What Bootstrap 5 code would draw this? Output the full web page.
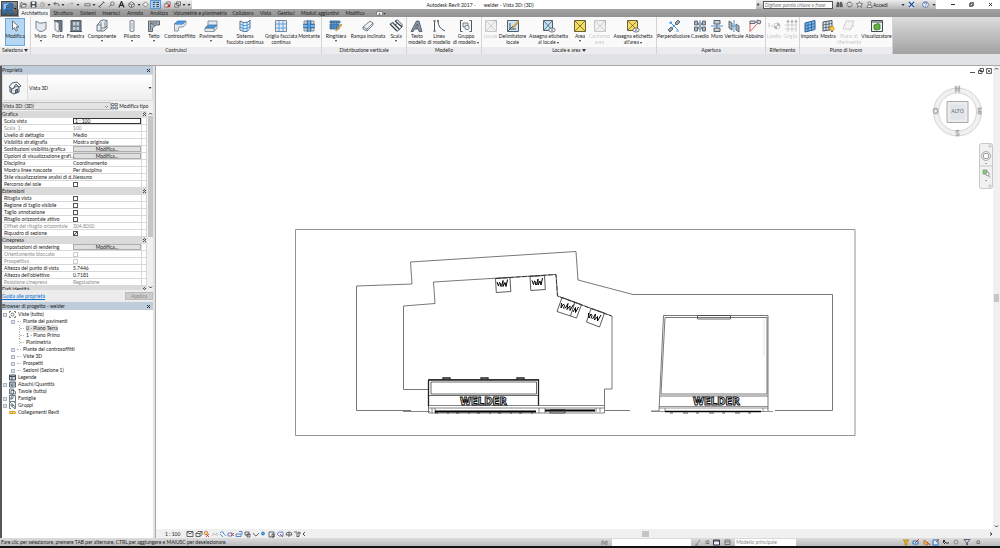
<!DOCTYPE html>
<html lang="it">
<head>
<meta charset="utf-8">
<meta name="viewport" content="width=device-width, initial-scale=1">
<title>Autodesk Revit 2017 - welder - Vista 3D: (3D)</title>
<link rel="stylesheet" href="https://cdn.jsdelivr.net/npm/bootstrap@5.3.0/dist/css/bootstrap.min.css">
<script src="https://cdn.jsdelivr.net/npm/bootstrap@5.3.0/dist/js/bootstrap.bundle.min.js"></script>
<style>
:root{--ink:#222;--line:#d8d8d8;--chrome:#e0e2e5;--head:#bfccda}
body{font-family:"Lato","Liberation Sans",sans-serif;font-size:5px;line-height:6px;color:var(--ink);background:#fff;white-space:nowrap;overflow:hidden;font-variant-ligatures:none}
button,input,select{font:inherit;color:inherit}
svg{display:block;flex:none}
.plain{border:0;background:none;padding:0;border-radius:0}
.app{min-height:100vh}
/* title bar */
.appmenu{width:17px;height:15px;left:1px;top:1px;background:linear-gradient(#8e969e,#4f575f);border:1px solid #444;z-index:2}
.titlebar{height:9px}
.wintitle{padding-left:12px}
.qat{margin-left:19px;background:linear-gradient(#f0f0f0,#b9b9b9);display:grid;grid-template-columns:9px 10px 8px 6px 8px 6px 8px 8px 10px 4px 10px 10px 10px 10px 5px 9px 11px 12px 8px 5px 6px;justify-items:center;align-items:stretch}
.qat button{display:flex;align-items:center;justify-content:center;width:100%}
.qat .on{background:#a9d1f5;border:1px solid #5b9bd5}
.infobar{background:linear-gradient(#ececec,#b5b5b5);width:180px;gap:3px}
.infobar input{width:70px;height:8px;border:1px solid #555;border-radius:0;padding:0 1px;background:#fff;line-height:6px}
.infobar input::placeholder{color:#777;opacity:1;font-style:italic}
.wins{width:64px}
/* tabs */
.tabstrip{height:8px;background:linear-gradient(#a3a3a3,#929292);padding-left:19px}
.tablist{display:grid;grid-template-columns:31px 26px 24px 22px 26px 22px 60px 26px 19px 22px 46px 24px 28px}
.tablist a{color:#222;text-decoration:none;line-height:8px;text-align:center;display:flex;align-items:center;justify-content:center}
.tablist a.active{background:#f4f5f6}
/* ribbon */
.ribbon{background:linear-gradient(#dcdcdc,#a2a2a2);height:37px}
.panel{border-right:1px solid #d4d4d4;background:#fafafa}
.tools{display:grid;height:30px}
.tools button{display:flex;flex-direction:column;align-items:center;padding-top:2px;min-width:0}
.tools button:disabled{color:#bbb;opacity:.8}
.tools button:disabled svg{filter:grayscale(1);opacity:.4}
.tools .dn{margin-top:1px}
.caption2{height:7px;line-height:7px;background:#ececee;text-align:center}
.c-sel{width:31px}.c-sel .tools{grid-template-columns:20px;justify-content:center;padding:1px 0}
.c-sel button{background:#b5d7f3;border:1px solid #6da7da;padding-top:0}
.c-cos .tools{grid-template-columns:19px 16px 19px 34px 26px 18px 34px 28px 40px 32px 24px}
.c-dis .tools{grid-template-columns:28px 36px 20px}
.c-mod .tools{grid-template-columns:20px 24px 30px}
.c-loc .tools{grid-template-columns:17px 27px 45px 18px 21px 46px}
.c-ape .tools{grid-template-columns:33px 20px 14px 20px 21px}
.c-rif .tools{grid-template-columns:16px 17px}
.c-pia .tools{grid-template-columns:19px 18px 24px 31px}
.dn{width:0;height:0;border:1px solid transparent;border-top:2px solid #333;border-bottom:0;display:inline-block}
.caption2 .dn{border-width:3px 2px 0}
.options{height:12px;background:var(--chrome);border-bottom:1px solid #a8a8a8}
/* docks */
.docks{width:156px;background:var(--chrome);border-left:2px solid #55575a;padding-right:2px;border-right:1px solid #aaa}
.dockhead{height:8px;background:var(--head);padding:0 2px 0 0}
.typebox{height:27px;background:linear-gradient(#fff,#eee);border:1px solid #ddd}
.typebox .thumb{width:25px;border-right:1px solid #ddd;background:#f6f6f6}
.filter{height:10px;background:#f0f0f0;gap:2px}
.filter select{width:109px;height:8px;border:1px solid #bbb;border-radius:0;background:#e4e4e4;appearance:none;padding:0}
.filter .chev{margin-left:-9px;pointer-events:none}
.props{height:179px;overflow:hidden;background:#fff}
.ptable{width:145px;table-layout:fixed;border-collapse:separate;border-spacing:0}
.ptable th,.ptable td{height:7px;line-height:6px;padding:0 0 0 2px;border-bottom:1px solid var(--line);font-weight:400}
.ptable td{padding-left:0;border-right:1px solid var(--line)}
.ptable .grp th{background:#dadada;padding-left:0;border-color:#dadada}
.ptable .off{color:#8b8b8b}
.ptable td button{display:block;width:100%;height:6px;background:#dfdfdf;border:1px solid #adadad;line-height:4px}
.ptable td input[type=text]{display:block;width:100%;height:6px;border:1px solid #333;padding:0 1px;line-height:4px}
input[type=checkbox]{appearance:none;display:block;width:5px;height:5px;margin:0;border:1px solid #555;background:#fff}
input[type=checkbox]:disabled{border-color:#ccc}
input[type=checkbox]:checked{background:linear-gradient(135deg,#fff 30%,#555 50%,#fff 70%)}
.vbar{width:7px;background:#f0f0f0}
.vbar .grip{background:#c6c6c6;width:5px}
.helprow{height:12px;background:#ececec}
.helprow a{color:#0a6fd0}
.helprow button{width:28px;height:8px;background:#ccc;color:#888;border:1px solid #bbb;line-height:6px}
.tree{background:#fff;padding:1px 0}
.tree ul{list-style:none;margin:0;padding:0 0 0 8px}
.tree>ul{padding-left:1px}
.node{height:7px;line-height:7px;display:flex;align-items:center;gap:2px}
.box{width:4px;height:4px;border:1px solid #a9b4c2;background:#dfe5ee;flex:none}
.dash{width:4px;border-top:1px dotted #bbb;flex:none}
.nobox{width:4px;flex:none}
.pick{background:#e2e2e2}
.deep{border-left:1px dotted #bbb}
/* view */
.view{background:#fff;min-width:0}
.cube{right:8px;top:18px}
.steer{right:0;top:77px}
.mdi{right:1px;top:2px;gap:2px}
.viewbar{height:9px;background:#f0f0f0}
.viewbar .scale{width:30px;padding-left:9px}
.statusbar{height:10px;background:linear-gradient(#ddd,#bbb);border-bottom:2px solid #111;padding-left:1px}
.statusbar select{height:7px;border:0;border-radius:0;background:#fff;padding:0 1px;appearance:none;color:#888}
.stright{width:399px;padding-right:20px}
.workset{width:79px}
.design{width:61px}
</style>
</head>
<body>
<svg width="0" height="0" class="position-absolute" fill="none" stroke="#59636e">
<defs>
<symbol id="dd" viewBox="0 0 4 4"><path d="M.5 1h3L2 3z" fill="#333" stroke="none"/></symbol>
<symbol id="pin" viewBox="0 0 5 5"><path d="M1 2l1.500-1.500L4 2M1 4l1.500-1.500L4 4" fill="none" stroke="#222" stroke-width=".8"/></symbol>
<symbol id="x" viewBox="0 0 5 5"><path d="M1 1l3 3M4 1L1 4" stroke="#222" stroke-width=".9"/></symbol>
<symbol id="i-cur" viewBox="0 0 14 14"><path d="M4.500 2v8.500l2-2 1.500 3.500 1.500-.7L8 8h3z" fill="#fff" stroke="#444" stroke-width=".7"/></symbol>
<symbol id="i-muro" viewBox="0 0 14 14"><path d="M2 2q3 3 7 2l3-1v7q-4 4-8 1.500l-2-2z" fill="#e3e9ef" stroke="#6b7783" stroke-width=".9"/></symbol>
<symbol id="i-porta" viewBox="0 0 14 14"><path d="M3 1.500h8v11H9" fill="#6d7984" stroke="#56616b"/><path d="M4 2l4 2v9l-4-2z" fill="#edf1f5" stroke="#56616b" stroke-width=".7"/></symbol>
<symbol id="i-fin" viewBox="0 0 14 14"><path d="M2 1.500h10v11H2z" fill="#73808c" stroke="#4c5762"/><path d="M4 3h2.500v3.500H4zM7.500 3H10v3.500H7.500zM4 8h2.500v3H4zM7.500 8H10v3H7.500z" fill="#c3ced9" stroke="none"/><path d="M1 12.500h12" stroke="#4c5762"/></symbol>
<symbol id="i-comp" viewBox="0 0 14 14"><path d="M2 6l3-3V2q3-2 7-.5V9l-3 3H2z" fill="#e6ebf0" stroke="#5e6a76" stroke-width=".9"/><path d="M2 6h4V3.500M6 6v3h4V3.500l2-2M10 9l2-2M6 9v3" stroke="#5e6a76" stroke-width=".8" fill="none"/></symbol>
<symbol id="i-pil" viewBox="0 0 14 14"><path d="M5 2q2-1.500 4 0v10q-2 1.500-4 0z" fill="#e9edf1" stroke="#707c88" stroke-width=".9"/><path d="M7 4v6" stroke="#9aa5b0" stroke-width=".8"/></symbol>
<symbol id="i-tetto" viewBox="0 0 14 14"><path d="M1.500 2h11v4H9L5.500 9v3.500h-4z" fill="#a9b4be" stroke="#505b66" stroke-width=".9"/><path d="M3.500 4h7M3.500 4v7M3.500 4L8 6.500" fill="none" stroke="#505b66" stroke-width=".7"/></symbol>
<symbol id="i-contro" viewBox="0 0 14 14"><path d="M1.500 5l3-3H13l-3 3z" fill="#4e9be0" stroke="#3675b4" stroke-width=".8"/><path d="M1.500 5H10l3-3v3l-3 3H6l-1 4H1.500z" fill="#e2e8ee" stroke="#75818d" stroke-width=".8"/><path d="M3 5.500l2-2h6l-2 2z" fill="#4e9be0" stroke="none"/></symbol>
<symbol id="i-pav" viewBox="0 0 14 14"><path d="M4 2h9v7l-3 3.500H1V9l3-3z" fill="#e2e8ee" stroke="#75818d" stroke-width=".8"/><path d="M1.500 9l3-3H13l-3 3z" fill="#4e9be0" stroke="#3675b4" stroke-width=".8"/><path d="M1 9h9v3.500" fill="none" stroke="#75818d" stroke-width=".8"/></symbol>
<symbol id="i-sis" viewBox="0 0 14 14"><path d="M2 2q4 3 8 1l2-2v8.500l-3 3Q5 13 2 11z" fill="#e7f1fb" stroke="#45617e" stroke-width=".9"/><path d="M2 5q4 3 8 1l2-2M2 8q4 3 8 1l2-2M5 3.500V12M9 3.500v9" fill="none" stroke="#3f8fd9" stroke-width=".9"/></symbol>
<symbol id="i-gri" viewBox="0 0 14 14"><path d="M1.500 1.500h11v11h-11z" fill="#e9edf1" stroke="#7d8893"/><path d="M5 1v12M9 1v12M1 5h12M1 9h12" stroke="#4a99e3" stroke-width=".9"/></symbol>
<symbol id="i-mon" viewBox="0 0 14 14"><path d="M2 2h3v3H2zM9 2h3v3H9zM2 9h3v3H2zM9 9h3v3H9z" fill="#d9e0e7" stroke="#6b7783" stroke-width=".8"/><path d="M5.500 1v12M8.500 1v12M1 5.500h12M1 8.500h12" stroke="#3b6c9c" stroke-width=".9"/><path d="M7 1v12M1 7h12" stroke="#4a99e3" stroke-width="1.600"/></symbol>
<symbol id="i-rin" viewBox="0 0 14 14"><path d="M1 2h10v2H1zM1 5h9v5H1z" fill="#4e8fcb" stroke="#396b9a" stroke-width=".8"/><path d="M2.500 2v8M5 2v8M7.500 2v8" stroke="#396b9a" stroke-width=".7"/><path d="M6.500 11.500L12 5l1 1-5.500 6z" fill="#f0b33c" stroke="#996f1c" stroke-width=".5"/></symbol>
<symbol id="i-ramp" viewBox="0 0 14 14"><path d="M2 8l7-6 3 2v2l-6 6-4-2z" fill="#eef1f4" stroke="#66727e" stroke-width=".9"/><path d="M2 8l4 2 6-6M6 10v2" fill="none" stroke="#66727e" stroke-width=".8"/></symbol>
<symbol id="i-scala" viewBox="0 0 14 14"><path d="M1 5l7 7M3.500 3.500l7 7M6 2l7 6" stroke="#39434e" stroke-width="1.300"/><path d="M1 5l2.500-1.500L6 6l2.500-1.500M6 2l2.500-1L13 5.500V8l-5 4.500" fill="none" stroke="#4b5763"/></symbol>
<symbol id="i-testo" viewBox="0 0 14 14"><path d="M1 12.500L6.500 2h2.500l3 10.500H9L8.500 10h-4l-1.200 2.500zM5.500 8H8l-.6-3z" fill="#8b98a5" stroke="#414d59" stroke-width=".8"/></symbol>
<symbol id="i-linea" viewBox="0 0 14 14"><path d="M2.500 2v10M6 2q0 7 7 10" fill="none" stroke="#4d5761"/><path d="M1.500 1h2v2h-2zM1.500 11h2v2h-2zM5 1h2v2H5z" fill="#6c7782" stroke="none"/></symbol>
<symbol id="i-gru" viewBox="0 0 14 14"><path d="M3.500 1.500h-2v11h2M10.500 1.500h2v11h-2" fill="none" stroke="#4d5761"/><path d="M4 4h5v4H4z" fill="#dfe5ea" stroke="#5e6a76" stroke-width=".8"/><circle cx="8" cy="8.500" r="2.200" fill="#eef1f4" stroke="#5e6a76" stroke-width=".8"/></symbol>
<symbol id="i-loc" viewBox="0 0 14 14"><path d="M1.500 1.500h11v11h-11z" fill="#bfe0f5" stroke="#525e69"/><path d="M2 2l10 10M12 2L2 12" stroke="#525e69" stroke-width=".8"/><path d="M8 1.500h4.500V6" fill="none" stroke="#222"/></symbol>
<symbol id="i-del" viewBox="0 0 14 14"><path d="M1.500 1.500h11v11h-11z" fill="#cbe4f6" stroke="#525e69"/><path d="M2 12l5-5M4 4v6h6" stroke="#3d4954" fill="none" stroke-width=".9"/><path d="M6 8.500L12 2l1 1-5.500 6z" fill="#f0b33c" stroke="#996f1c" stroke-width=".5"/></symbol>
<symbol id="i-asl" viewBox="0 0 14 14"><path d="M1.500 1.500h9v10h-9z" fill="#bfe0f5" stroke="#525e69"/><path d="M2 2l8 9M10 2l-8 9" stroke="#525e69" stroke-width=".8"/><ellipse cx="10" cy="11" rx="3.200" ry="2" fill="#fff" stroke="#4d5761" stroke-width=".8"/><circle cx="10" cy="11" r=".8" fill="#3b4650" stroke="none"/></symbol>
<symbol id="i-area" viewBox="0 0 14 14"><path d="M1.500 1.500h11v11h-11z" fill="#f7dc62" stroke="#6b6336"/><path d="M2 2l10 10M12 2L2 12" stroke="#6b6336" stroke-width=".8"/></symbol>
<symbol id="i-asa" viewBox="0 0 14 14"><path d="M1.500 1.500h10v10h-10z" fill="#f7dc62" stroke="#6b6336"/><path d="M2 2l9 9M11 2l-9 9" stroke="#6b6336" stroke-width=".8"/><ellipse cx="10" cy="11" rx="3.200" ry="2" fill="#fff" stroke="#4d5761" stroke-width=".8"/><circle cx="10" cy="11" r=".8" fill="#3b4650" stroke="none"/></symbol>
<symbol id="i-per" viewBox="0 0 14 14"><path d="M3 3l8 8M11 3l-8 8" stroke="#3f8fd9" stroke-width=".9"/><path d="M8 4l3-3 2 2-3 3zM1 11l3-3 2 2-3 3z" fill="#98a4b0" stroke="#47535f" stroke-width=".8"/><path d="M2 4h3M4 2v3M9 12h3" stroke="#3f8fd9" stroke-width=".9"/></symbol>
<symbol id="i-cav" viewBox="0 0 14 14"><path d="M1.500 2h3v4h-3zM1.500 8h3v4h-3zM9.500 2h3v4h-3zM9.500 8h3v4h-3z" fill="#aab5c0" stroke="#47535f" stroke-width=".8"/><path d="M7 1v12" stroke="#3f8fd9"/><path d="M5.500 4h3v2h-3zM5.500 8h3v2h-3z" fill="#cfd7df" stroke="#47535f" stroke-width=".6"/></symbol>
<symbol id="i-mur" viewBox="0 0 14 14"><path d="M4 1.500h6V5H4zM4 9h6v3.500H4z" fill="#c4cdd6" stroke="#47535f" stroke-width=".9"/><path d="M1 7h12" stroke="#3f8fd9"/><path d="M7 5v4" stroke="#47535f" stroke-width=".7"/></symbol>
<symbol id="i-ver" viewBox="0 0 14 14"><path d="M2 2l3 2v7L2 9zM9 5l3 2v6l-3-2z" fill="#aab5c0" stroke="#47535f" stroke-width=".8"/><path d="M7 1v12M5 7h4" stroke="#3f8fd9" stroke-width=".9"/></symbol>
<symbol id="i-abb" viewBox="0 0 14 14"><path d="M2 12.500V3.500L11 3M2 12.500L11 3" fill="none" stroke="#d4604e"/><path d="M2 2h5v2.500H2zM9 1l4 1-1 3-3-1z" fill="#cfd7df" stroke="#47535f" stroke-width=".8"/></symbol>
<symbol id="i-liv" viewBox="0 0 14 14"><path d="M1 7h7M2 4v3" stroke="#555" stroke-dasharray="2 1"/><circle cx="10" cy="7" r="3" fill="#fff" stroke="#444" stroke-width=".8"/><path d="M10 4v3h3a3 3 0 0 0-3-3M10 10V7H7a3 3 0 0 0 3 3" fill="#222" stroke="none"/></symbol>
<symbol id="i-grg" viewBox="0 0 14 14"><path d="M4 4v9M8 4v9M12 4v9M1 6h12M1 10h12" stroke="#555" stroke-width=".8"/><circle cx="4" cy="2.500" r="1.300"/><circle cx="8" cy="2.500" r="1.300"/><circle cx="12" cy="2.500" r="1.300"/></symbol>
<symbol id="i-imp" viewBox="0 0 14 14"><path d="M2 4l10-2.500v9L2 13z" fill="#7bb9ef" stroke="#285d90"/><path d="M5 3.500v9M8.500 2.500v9M2 7l10-2.500M2 10l10-2.500" stroke="#285d90" stroke-width=".8"/></symbol>
<symbol id="i-mos" viewBox="0 0 14 14"><path d="M2 3l9-1.500v9L2 12z" fill="#dfe5eb" stroke="#47535f"/><path d="M5 3v8.500M8 2v9M2 6l9-1.500M2 9l9-1.500" stroke="#47535f" stroke-width=".8"/><circle cx="11" cy="9.500" r="2.200" fill="#fbc73d" stroke="#b98518" stroke-width=".6"/><path d="M10 12.500h2" stroke="#666"/></symbol>
<symbol id="i-pia" viewBox="0 0 14 14"><path d="M4 2h8l-3 8H1z" fill="#e5e5e5" stroke="#777"/><path d="M7 12l5-6" stroke="#777"/></symbol>
<symbol id="i-vis" viewBox="0 0 14 14"><path d="M1.500 1.500h11v11h-11z" fill="#eef2ee" stroke="#3f4a54"/><path d="M1 3h12" stroke="#3f4a54"/><path d="M4 6l4-1.500 2 1V10l-4 1-2-1z" fill="#63b246" stroke="#347a1f" stroke-width=".8"/></symbol>
</defs>
</svg>
<div class="app d-flex flex-column position-relative">
<button class="plain appmenu position-absolute d-flex align-items-center justify-content-center" aria-label="Menu applicazione"><svg width="15" height="13" viewBox="0 0 15 13"><path d="M1 1h6.500q3.500 0 3.500 3T8.500 7.500L11 12H8L6 8H4v4H1zM4 3.500v2h3q1 0 1-1t-1-1z" fill="#2f78bd" stroke="#163f6b" stroke-width=".5"/><path d="M1.500 1.500h6L4 3.500V6L1.500 8z" fill="#8cc6f6"/><path d="M12 6h2.500l-1.250 1.500z" fill="#111"/></svg></button>
<header class="titlebar d-flex justify-content-between">
<div class="qat">
<button class="plain" aria-label="Apri"><svg width="7" height="7" viewBox="0 0 8 8" fill="#eee" stroke="#444" stroke-width=".8"><path d="M1 7V2h2l1 1h2v1M1 7l1.500-3H7.500L6 7z"/></svg></button>
<button class="plain" aria-label="Salva"><svg width="7" height="7" viewBox="0 0 8 8"><path d="M1 1h6v6H1z" fill="#4a5664" stroke="#333" stroke-width=".6"/><path d="M2.500 1h3v2.500h-3zM2.500 5h3v2h-3z" fill="#fff"/></svg></button>
<button class="plain" aria-label="Sincronizza"><svg width="7" height="7" viewBox="0 0 8 8" fill="none" stroke="#999" stroke-width=".8"><circle cx="4" cy="4" r="2.500"/><path d="M4 2v2h2"/></svg></button>
<button class="plain" aria-label="Altro"><svg width="4" height="4"><use href="#dd"/></svg></button>
<button class="plain" aria-label="Annulla"><svg width="7" height="7" viewBox="0 0 8 8" fill="none" stroke="#555"><path d="M3 1L1 3l2 2M1 3h4q2 0 2 3"/></svg></button>
<button class="plain" aria-label="Altro"><svg width="4" height="4"><use href="#dd"/></svg></button>
<button class="plain" aria-label="Ripeti"><svg width="7" height="7" viewBox="0 0 8 8" fill="none" stroke="#aaa"><path d="M5 1l2 2-2 2M7 3H3Q1 3 1 6"/></svg></button>
<button class="plain" aria-label="Altro"><svg width="4" height="4"><use href="#dd"/></svg></button>
<button class="plain" aria-label="Misura"><svg width="7" height="7" viewBox="0 0 8 8" fill="none" stroke="#666" stroke-width=".8"><path d="M1 3v3M7 3v3M1 3h6M1 5.500h6"/></svg></button>
<button class="plain" aria-label="Altro"><svg width="4" height="4"><use href="#dd"/></svg></button>
<button class="plain" aria-label="Quota"><svg width="7" height="7" viewBox="0 0 8 8" fill="none" stroke="#333"><path d="M1.500 6.500l5-5M.5 5.500l2 2M5.500.5l2 2"/></svg></button>
<button class="plain" aria-label="Etichetta"><svg width="7" height="7" viewBox="0 0 8 8" fill="none" stroke="#555" stroke-width=".8"><path d="M1 7l3-3"/><circle cx="5" cy="3" r="2"/></svg></button>
<button class="plain" aria-label="Testo"><svg width="7" height="7" viewBox="0 0 8 8" fill="none" stroke="#222" stroke-width="1.200"><path d="M1 7.500l3-7 3 7M2 5h4"/></svg></button>
<button class="plain" aria-label="Vista 3D"><svg width="7" height="7" viewBox="0 0 8 8" fill="#eee" stroke="#444" stroke-width=".8"><path d="M1 3l3-2 3 2v3L4 7.500 1 6zM1 3l3 1.500L7 3M4 4.500v3"/></svg></button>
<button class="plain" aria-label="Altro"><svg width="4" height="4"><use href="#dd"/></svg></button>
<button class="plain" aria-label="Sezione"><svg width="7" height="7" viewBox="0 0 8 8" fill="#eee" stroke="#555" stroke-width=".8"><path d="M4 1l3 3-3 3-3-3z"/></svg></button>
<button class="plain on" aria-label="Linee sottili"><svg width="7" height="7" viewBox="0 0 8 8" stroke="#222"><path d="M1 1.500h3M5 1.500h3M1 4h2M5 4h3M1 6.500h2M5 6.500h3"/></svg></button>
<button class="plain" aria-label="Chiudi nascoste"><svg width="7" height="7" viewBox="0 0 8 8" fill="#eee" stroke="#555" stroke-width=".8"><path d="M1 3h4v4H1zM3 3V1h4v4"/><path d="M4 4l3 3M7 4L4 7" stroke="#d22" stroke-width="1.200"/></svg></button>
<button class="plain" aria-label="Cambia finestra"><svg width="7" height="7" viewBox="0 0 8 8" fill="#eee" stroke="#444" stroke-width=".8"><path d="M3 1h4.500v4H3zM1 3h4.500v4H1z"/></svg></button>
<button class="plain" aria-label="Altro"><svg width="4" height="4"><use href="#dd"/></svg></button>
<button class="plain" aria-label="Personalizza"><svg width="4" height="4"><use href="#dd"/></svg></button>
</div>
<div class="wintitle d-flex align-items-center gap-2"><span>Autodesk Revit 2017 -</span><span>welder - Vista 3D: (3D)</span></div>
<div class="d-flex">
<div class="infobar d-flex align-items-center">
<svg width="4" height="5" viewBox="0 0 4 5"><path d="M1.500 1v3l2-1.500z" fill="#222"/></svg>
<input type="text" placeholder="Digitare parola chiave o frase" aria-label="Cerca">
<svg width="7" height="7" viewBox="0 0 8 8" fill="#666" stroke="#333" stroke-width=".6"><path d="M1.500 1.500h1.500L3.500 6.500H.5zM5 1.500h1.500l1 5h-3zM3 3.500h2"/></svg>
<svg width="7" height="7" viewBox="0 0 8 8" fill="none" stroke="#555"><path d="M1 4a3 3 0 0 1 5-2l1 1M7 4a3 3 0 0 1-5 2L1 5"/></svg>
<svg width="7" height="7" viewBox="0 0 8 8" fill="#eee" stroke="#444" stroke-width=".7"><path d="M4 .7l1 2.300h2.500L5.600 4.600l.7 2.600L4 5.700 1.700 7.200l.7-2.600L.5 3H3z"/></svg>
<button class="plain d-flex align-items-center"><svg width="7" height="7" viewBox="0 0 8 8" fill="#eee" stroke="#444" stroke-width=".7"><circle cx="4" cy="2.500" r="1.700"/><path d="M1 7.500q0-3 3-3t3 3z"/></svg>Accedi</button>
<svg class="ms-auto" width="4" height="4"><use href="#dd"/></svg>
<svg width="7" height="7" viewBox="0 0 8 8"><path d="M.5.500h7v7h-7z" fill="#dfe9f5"/><path d="M1 1l6 6M7 1L1 7" stroke="#1f4f97" stroke-width="1.600"/></svg>
<svg class="ms-1" width="7" height="7" viewBox="0 0 8 8"><circle cx="4" cy="4" r="3.300" fill="#eef4fb" stroke="#35598c" stroke-width=".8"/><path d="M2.800 3q0-1.200 1.200-1.200T5.200 3Q5.200 3.700 4 4.300M4 5.300v1" fill="none" stroke="#1f4f97" stroke-width=".9"/></svg>
<svg width="4" height="4"><use href="#dd"/></svg>
</div>
<div class="wins d-flex align-items-center justify-content-around ps-2">
<button class="plain" aria-label="Riduci"><svg width="5" height="5"><path d="M0 2.500h4" stroke="#333"/></svg></button>
<button class="plain" aria-label="Ripristina"><svg width="5" height="5" viewBox="0 0 5 5" fill="#fff" stroke="#333" stroke-width=".7"><path d="M1.500.5h3v3h-3zM.5 1.500h3v3h-3z"/></svg></button>
<button class="plain" aria-label="Chiudi"><svg width="5" height="5"><use href="#x"/></svg></button>
</div>
</div>
</header>
<nav class="tabstrip"><div class="tablist">
<a href="#" class="active">Architettura</a><a href="#">Struttura</a><a href="#">Sistemi</a><a href="#">Inserisci</a><a href="#">Annota</a><a href="#">Analizza</a><a href="#">Volumetrie e planimetria</a><a href="#">Collabora</a><a href="#">Vista</a><a href="#">Gestisci</a><a href="#">Moduli aggiuntivi</a><a href="#">Modifica</a>
<a href="#" aria-label="Riduci barra"><svg width="10" height="5" viewBox="0 0 10 5"><rect x=".5" y=".5" width="6" height="4" rx="1" fill="#eee" stroke="#555" stroke-width=".6"/><path d="M2.500 3.500h2l-1-1.500zM7.500 2h2l-1 1.500z" fill="#222"/></svg></a>
</div></nav>
<section class="ribbon d-flex">
<div class="panel c-sel"><div class="tools"><button class="plain"><svg width="14" height="14"><use href="#i-cur"/></svg>Modifica</button></div><div class="caption2">Seleziona <i class="dn"></i></div></div>
<div class="panel c-cos"><div class="tools">
<button class="plain"><svg width="14" height="14"><use href="#i-muro"/></svg>Muro<i class="dn"></i></button>
<button class="plain"><svg width="14" height="14"><use href="#i-porta"/></svg>Porta</button>
<button class="plain"><svg width="14" height="14"><use href="#i-fin"/></svg>Finestra</button>
<button class="plain"><svg width="14" height="14"><use href="#i-comp"/></svg>Componente<i class="dn"></i></button>
<button class="plain"><svg width="14" height="14"><use href="#i-pil"/></svg>Pilastro<i class="dn"></i></button>
<button class="plain"><svg width="14" height="14"><use href="#i-tetto"/></svg>Tetto<i class="dn"></i></button>
<button class="plain"><svg width="14" height="14"><use href="#i-contro"/></svg>Controsoffitto</button>
<button class="plain"><svg width="14" height="14"><use href="#i-pav"/></svg>Pavimento<i class="dn"></i></button>
<button class="plain"><svg width="14" height="14"><use href="#i-sis"/></svg>Sistema<br>facciata continua</button>
<button class="plain"><svg width="14" height="14"><use href="#i-gri"/></svg>Griglia facciata<br>continua</button>
<button class="plain"><svg width="14" height="14"><use href="#i-mon"/></svg>Montante</button>
</div><div class="caption2">Costruisci</div></div>
<div class="panel c-dis"><div class="tools">
<button class="plain"><svg width="14" height="14"><use href="#i-rin"/></svg>Ringhiera<i class="dn"></i></button>
<button class="plain"><svg width="14" height="14"><use href="#i-ramp"/></svg>Rampa inclinata</button>
<button class="plain"><svg width="14" height="14"><use href="#i-scala"/></svg>Scala<i class="dn"></i></button>
</div><div class="caption2">Distribuzione verticale</div></div>
<div class="panel c-mod"><div class="tools">
<button class="plain"><svg width="14" height="14"><use href="#i-testo"/></svg>Testo<br>modello</button>
<button class="plain"><svg width="14" height="14"><use href="#i-linea"/></svg>Linea<br>di modello</button>
<button class="plain"><svg width="14" height="14"><use href="#i-gru"/></svg>Gruppo<span>di modello <i class="dn"></i></span></button>
</div><div class="caption2">Modello</div></div>
<div class="panel c-loc"><div class="tools">
<button class="plain" disabled><svg width="14" height="14"><use href="#i-loc"/></svg>Locale</button>
<button class="plain"><svg width="14" height="14"><use href="#i-del"/></svg>Delimitatore<br>locale</button>
<button class="plain"><svg width="14" height="14"><use href="#i-asl"/></svg>Assegna etichetta<span>al locale <i class="dn"></i></span></button>
<button class="plain"><svg width="14" height="14"><use href="#i-area"/></svg>Area<i class="dn"></i></button>
<button class="plain" disabled><svg width="14" height="14"><use href="#i-loc"/></svg>Contorno<br>area</button>
<button class="plain"><svg width="14" height="14"><use href="#i-asa"/></svg>Assegna etichetta<span>all'area <i class="dn"></i></span></button>
</div><div class="caption2">Locale e area <i class="dn"></i></div></div>
<div class="panel c-ape"><div class="tools">
<button class="plain"><svg width="14" height="14"><use href="#i-per"/></svg>Perpendicolare</button>
<button class="plain"><svg width="14" height="14"><use href="#i-cav"/></svg>Cavedio</button>
<button class="plain"><svg width="14" height="14"><use href="#i-mur"/></svg>Muro</button>
<button class="plain"><svg width="14" height="14"><use href="#i-ver"/></svg>Verticale</button>
<button class="plain"><svg width="14" height="14"><use href="#i-abb"/></svg>Abbaino</button>
</div><div class="caption2">Apertura</div></div>
<div class="panel c-rif"><div class="tools">
<button class="plain" disabled><svg width="14" height="14"><use href="#i-liv"/></svg>Livello</button>
<button class="plain" disabled><svg width="14" height="14"><use href="#i-grg"/></svg>Griglia</button>
</div><div class="caption2">Riferimento</div></div>
<div class="panel c-pia"><div class="tools">
<button class="plain"><svg width="14" height="14"><use href="#i-imp"/></svg>Imposta</button>
<button class="plain"><svg width="14" height="14"><use href="#i-mos"/></svg>Mostra</button>
<button class="plain" disabled><svg width="14" height="14"><use href="#i-pia"/></svg>Piano di<br>riferimento</button>
<button class="plain"><svg width="14" height="14"><use href="#i-vis"/></svg>Visualizzatore</button>
</div><div class="caption2">Piano di lavoro</div></div>
</section>
<div class="options"></div>
<main class="d-flex flex-grow-1">
<aside class="docks d-flex flex-column flex-shrink-0">
<div class="dockhead d-flex align-items-center justify-content-between"><span>Proprietà</span><button class="plain" aria-label="Chiudi proprietà"><svg width="5" height="5"><use href="#x"/></svg></button></div>
<div class="typebox d-flex align-items-center">
<div class="thumb d-flex align-items-center justify-content-center h-100"><svg width="14" height="14" viewBox="0 0 14 14" fill="#dde4ea" stroke="#414d59" stroke-width=".9"><path d="M2 6v5l4 2 5-2V6L9 5 5 7z"/><path d="M1 6l3-4 5-1 4 4-2 1-3-3-3 5z" fill="#f3f6f8"/><path d="M3.500 8v3.500M7.500 9v3l2-1V8z" fill="#7b8793"/></svg></div>
<span class="flex-grow-1">&nbsp;Vista 3D</span><svg width="4" height="4"><use href="#dd"/></svg></div>
<div class="filter d-flex align-items-center"><select aria-label="Filtro proprietà"><option>Vista 3D: (3D)</option></select><svg class="chev" width="5" height="5" viewBox="0 0 5 5"><path d="M1 2l1.500 1.500L4 2" fill="none" stroke="#666" stroke-width=".7"/></svg>
<button class="plain d-flex align-items-center"><svg width="7" height="7" viewBox="0 0 7 7" fill="#dfe8f1" stroke="#4a5a6a" stroke-width=".7"><path d="M.5.500h2.500v2H.5zM.5 4h2.500v2H.5zM4 .5h2.500v2H4zM4 4h2.500v2H4z"/></svg>&nbsp;Modifica tipo</button></div>
<div class="props d-flex justify-content-between">
<table class="ptable"><colgroup><col style="width:71px"><col style="width:69px"><col style="width:5px"></colgroup>
<tbody>
<tr class="grp"><th colspan="2">Grafica</th><th><svg width="5" height="5"><use href="#pin"/></svg></th></tr>
<tr><th><label for="p1">Scala vista</label></th><td><input id="p1" type="text" value="1 : 100"></td><td></td></tr>
<tr class="off"><th>Scala&nbsp; 1:</th><td>100</td><td></td></tr>
<tr><th>Livello di dettaglio</th><td>Medio</td><td></td></tr>
<tr><th>Visibilità stratigrafia</th><td>Mostra originale</td><td></td></tr>
<tr><th>Sostituzioni visibilità/grafica</th><td><button class="plain">Modifica...</button></td><td></td></tr>
<tr><th>Opzioni di visualizzazione grafi...</th><td><button class="plain">Modifica...</button></td><td></td></tr>
<tr><th>Disciplina</th><td>Coordinamento</td><td></td></tr>
<tr><th>Mostra linee nascoste</th><td>Per disciplina</td><td></td></tr>
<tr><th>Stile visualizzazione analisi di d...</th><td>Nessuno</td><td></td></tr>
<tr><th><label for="k1">Percorso del sole</label></th><td><input id="k1" type="checkbox"></td><td></td></tr>
<tr class="grp"><th colspan="2">Estensioni</th><th><svg width="5" height="5"><use href="#pin"/></svg></th></tr>
<tr><th><label for="k2">Ritaglia vista</label></th><td><input id="k2" type="checkbox"></td><td></td></tr>
<tr><th><label for="k3">Regione di taglio visibile</label></th><td><input id="k3" type="checkbox"></td><td></td></tr>
<tr><th><label for="k4">Taglio annotazione</label></th><td><input id="k4" type="checkbox"></td><td></td></tr>
<tr><th><label for="k5">Ritaglio orizzontale attivo</label></th><td><input id="k5" type="checkbox"></td><td></td></tr>
<tr class="off"><th>Offset del ritaglio orizzontale</th><td>304.8000</td><td></td></tr>
<tr><th><label for="k6">Riquadro di sezione</label></th><td><input id="k6" type="checkbox" checked></td><td></td></tr>
<tr class="grp"><th colspan="2">Cinepresa</th><th><svg width="5" height="5"><use href="#pin"/></svg></th></tr>
<tr><th>Impostazioni di rendering</th><td><button class="plain">Modifica...</button></td><td></td></tr>
<tr class="off"><th><label for="k7">Orientamento bloccato</label></th><td><input id="k7" type="checkbox" disabled></td><td></td></tr>
<tr class="off"><th><label for="k8">Prospettiva</label></th><td><input id="k8" type="checkbox" disabled></td><td></td></tr>
<tr><th>Altezza del punto di vista</th><td>5.7446</td><td></td></tr>
<tr><th>Altezza dell'obiettivo</th><td>0.7181</td><td></td></tr>
<tr class="off"><th>Posizione cinepresa</th><td>Regolazione</td><td></td></tr>
<tr class="grp"><th colspan="2">Dati identità</th><th><svg width="5" height="5"><use href="#pin"/></svg></th></tr>
</tbody></table>
<div class="vbar d-flex flex-column align-items-center justify-content-between"><svg width="5" height="5" viewBox="0 0 5 5"><path d="M1 3.500L2.500 2 4 3.500" fill="none" stroke="#333"/></svg><div class="grip flex-grow-1 mb-5"></div><svg width="5" height="5" viewBox="0 0 5 5"><path d="M1 1.500L2.500 3 4 1.500" fill="none" stroke="#333"/></svg></div>
</div>
<div class="helprow d-flex align-items-center justify-content-between"><a href="#">Guida alle proprietà</a><button class="plain" disabled>Applica</button></div>
<div class="dockhead d-flex align-items-center justify-content-between"><span>Browser di progetto - welder</span><button class="plain" aria-label="Chiudi browser"><svg width="5" height="5"><use href="#x"/></svg></button></div>
<div class="tree flex-grow-1">
<ul>
<li><div class="node"><i class="box"></i><svg width="7" height="7" viewBox="0 0 7 7" fill="none" stroke="#555" stroke-width=".8"><path d="M.5 2V.5H2M5 .5h1.500V2M6.500 5v1.500H5M2 6.500H.5V5"/><circle cx="3.500" cy="3.500" r="1.500"/></svg>Viste (tutto)</div>
<ul>
<li><div class="node"><i class="box"></i><i class="dash"></i>Piante dei pavimenti</div>
<ul><li class="deep"><div class="node"><i class="dash"></i><span class="pick">0 - Piano Terra</span></div></li><li class="deep"><div class="node"><i class="dash"></i>1 - Piano Primo</div></li><li class="deep"><div class="node"><i class="dash"></i>Planimetria</div></li></ul></li>
<li><div class="node"><i class="box"></i><i class="dash"></i>Piante dei controsoffitti</div></li>
<li><div class="node"><i class="box"></i><i class="dash"></i>Viste 3D</div></li>
<li><div class="node"><i class="box"></i><i class="dash"></i>Prospetti</div></li>
<li><div class="node"><i class="box"></i><i class="dash"></i>Sezioni (Sezione 1)</div></li>
</ul></li>
<li><div class="node"><i class="nobox"></i><svg width="7" height="7" viewBox="0 0 7 7" fill="#cfd8e2" stroke="#3f4c59"><path d="M.5 1h6v5h-6zM1 2.500h5M3 3v3"/></svg>Legende</div></li>
<li><div class="node"><i class="box"></i><svg width="7" height="7" viewBox="0 0 7 7" fill="#eef2f6" stroke="#4c5a68" stroke-width=".9"><path d="M.5 1h6v5h-6zM1 2h5M3 3v3M1 4h5"/></svg>Abachi/Quantità</div></li>
<li><div class="node"><i class="nobox"></i><svg width="7" height="7" viewBox="0 0 7 7" fill="#f4f6f8" stroke="#4c5a68" stroke-width=".8"><path d="M.5 1h4v5h-4zM2 2.500h3l1.500 1V6H2z"/></svg>Tavole (tutto)</div></li>
<li><div class="node"><i class="box"></i><svg width="7" height="7" viewBox="0 0 7 7" fill="#f4f6f8" stroke="#4c5a68" stroke-width=".8"><path d="M.5.500h6v6h-6zM2 5V2h3M2 3.500h2"/></svg>Famiglie</div></li>
<li><div class="node"><i class="box"></i><svg width="7" height="7" viewBox="0 0 7 7" fill="none" stroke="#4c5a68" stroke-width=".8"><path d="M2 .5H.5v6H2M5 .5h1.500v6H5M2 2h2v2H2z"/><circle cx="4.500" cy="4.500" r="1"/></svg>Gruppi</div></li>
<li><div class="node"><i class="nobox"></i><svg width="7" height="7" viewBox="0 0 7 7" fill="none" stroke="#d79a12" stroke-width="1.200"><rect x=".6" y="2.500" width="3" height="2" rx="1"/><rect x="3.400" y="2.500" width="3" height="2" rx="1"/></svg>Collegamenti Revit</div></li>
</ul>
</div>
</aside>
<section class="view d-flex flex-column flex-grow-1">
<div class="d-flex flex-grow-1">
<div class="position-relative flex-grow-1">
<svg class="w-100" viewBox="156 66 837 463" fill="none" stroke="#555" stroke-width=".8">
<path d="M295.500 229.500h559.500v206H295.500z" stroke="#777"/>
<path d="M411 410.500H356.500V286l55.500-2-1.500-22L576 251.500l2 28.500 55 14.500h199.500v116H775M605 410.500h25M651 411h8"/>
<path d="M429 389.500H403.500V306l31.500-2.500-1.500-21.500L556 274.500l1.500 21.500 54.500 20v73h-7.500v17"/>
<path d="M496 278.500L556 274.500l1.500 21.500 54 20" stroke="#222" stroke-dasharray="5 1.500"/>
<path d="M495.500 278.500l14.500-1 .8 14-14.500 1zM530 276.500l14.500-1 .8 14-14.500 1zM562 297.500l19.500 7-5 13.500L557 311.500zM575 302l-4.500 14M591 308.500l13.500 4.500-5 14-13-5z" stroke="#333"/>
<path d="M497 282l1.500 4 1-3.500q2 0 1 4M501.500 286.500l1.500-6v6l2-4 1 4 1.500-7M532 280.500l1.500 4 1-3.500q2 0 1 4M536.500 285l1.500-6v6l2-4 1 4 1.500-7M561.500 303l-.5 5 2.500-4q2 1 0 4.500M565 308.500l3-5-1 6 3-3.500v4.500l3.500-6M573 312l2.500-4.500v5l3-5.500M588.500 313l.5 5 2-4q2 1 0 4.500M592.500 319l3-5-1 6 3-3.500v4.500l3.500-6" stroke="#000" stroke-width="1"/>
<path d="M428.500 413v-33.500h110V406M431 382h105.500v12H431zM429 395.500h109" stroke="#444"/>
<path d="M428.500 380h110v26M428.500 380v26" stroke="#222" stroke-width="1.300"/>
<path d="M443 379.500v-1.500h7v1.500M481 379.500v-1.500h7v1.500M517 379.500v-1.500h7v1.500" stroke="#222" stroke-width="1.300"/>
<path d="M429 405.500h175.500v7.500H429M429 408h176M403 411.500h27M432 408v5M435 408v5M539 408v5M545 408v5M596 408v4M600 408v4" stroke="#666"/>
<path d="M435 411.500h101M545 410.500h50" stroke="#000" stroke-width="1.800"/>
<path d="M435 413h100" stroke="#222" stroke-dasharray="3 9 2 7"/>
<path d="M550 409.500h15v3.500h-15zM550 411h15" stroke="#333"/>
<path d="M659 411l4.500-95.500h104.500v95.500M661 394l4-76.500h102v76.500zM660 396h108" stroke="#555"/>
<path d="M697.500 315.500h33v3.500h-33z" stroke="#444"/><path d="M764 318v38" stroke="#ddd"/>
<path d="M659 406.500h109M659 408h109M651 411.500h122M665 408v4M763 408v4" stroke="#777"/>
<path d="M665 411.500h96" stroke="#000" stroke-width="1.500"/><path d="M670 413h88" stroke="#333" stroke-dasharray="3 10 5 8"/>
<g font-family="DejaVu Sans" font-weight="700" font-size="10" fill="#fff" stroke="#111" stroke-width="1"><text x="460" y="404.500">WELDER</text><text x="693" y="404.500">WELDER</text></g>
</svg>
<div class="mdi position-absolute d-flex">
<svg width="6" height="6"><path d="M0 4.500h5" stroke="#555"/></svg><svg width="6" height="6" viewBox="0 0 6 6" fill="#fff" stroke="#444" stroke-width=".9"><path d="M2 .5h3.500v3H2zM.5 2.500H4v3H.5z"/></svg><svg width="6" height="6" viewBox="0 0 6 6" stroke="#444" stroke-width=".8" fill="none"><path d="M.5.500h5v5h-5zM1.500 1.500l3 3M4.500 1.500l-3 3"/></svg></div>
<div class="cube position-absolute"><svg width="54" height="54" viewBox="931 84 54 54">
<circle cx="957.500" cy="112" r="21.500" fill="none" stroke="#f0f0f0" stroke-width="5"/><circle cx="957.500" cy="112" r="24" fill="none" stroke="#ccc" stroke-width=".8"/><circle cx="957.500" cy="112" r="19" fill="none" stroke="#ccc" stroke-width=".8"/>
<path d="M947 101.500h21v21h-21z" fill="#ececee" stroke="#aaa"/><path d="M950 104.500h15v15h-15z" fill="#e1e4e9"/>
<g font-size="7" font-weight="700" text-anchor="middle" fill="#fff" stroke="#999" stroke-width=".6"><text x="957.500" y="92">N</text><text x="957.500" y="136">S</text><text x="935.500" y="114">O</text><text x="979.500" y="114">E</text></g><text x="957.500" y="113" font-size="5" text-anchor="middle" fill="#666">ALTO</text></svg></div>
<div class="steer position-absolute"><svg width="14" height="46" viewBox="0 0 14 46" fill="none" stroke="#bbb" stroke-width=".8"><rect x=".5" y=".5" width="13" height="45" rx="2" fill="#f1f1f1"/><circle cx="11" cy="3" r="1.200"/><circle cx="11" cy="43" r="1.200"/><circle cx="7" cy="13" r="4.500" stroke="#999"/><rect x="4.500" y="10.500" width="5" height="5" rx="1.500" fill="#fff" stroke="#888"/><path d="M1 23h12"/><path d="M4 27h4v4H4z" fill="#8cc686" stroke="#6aa864"/><circle cx="8.500" cy="31" r="1.700" fill="#fff" stroke="#777"/><path d="M9.500 32.500l1.500 2" stroke="#777"/><path d="M6 20h2l-1 1zM6 37h2l-1 1z" fill="#555" stroke="none"/></svg></div>
</div>
<div class="vbar d-flex flex-column align-items-center justify-content-between"><svg width="5" height="5" viewBox="0 0 5 5"><path d="M1 3.500L2.500 2 4 3.500" fill="none" stroke="#333"/></svg><div class="grip pt-1 pb-1"></div><svg width="5" height="5" viewBox="0 0 5 5"><path d="M1 1.500L2.500 3 4 1.500" fill="none" stroke="#333"/></svg></div>
</div>
<div class="viewbar d-flex align-items-center"><span class="scale">1 : 100</span>
<svg width="120" height="8" viewBox="0 0 120 8" fill="#eee" stroke="#444" stroke-width=".8"><path d="M1 1.500h6v5H1zM1 1.500l3 2.500 3-2.500"/><path d="M10 3.500l2-2h4v3l-2 2h-4zM10 3.500h4v3M14 3.500l2-2"/><circle cx="20" cy="3" r="1.800" fill="#ffd75a" stroke="#b77"/><path d="M20 4l3 3M23 4l-3 3" stroke="#d22"/><path d="M26 6l2-3 1 2 2-2v3" stroke="#bbb"/><path d="M34 3q2-3 4 0M37 3l3 3M34 4l3 3" stroke="#47c" fill="none"/><path d="M42 3h4v3h-4z" stroke="#47c"/><path d="M45 3l3 3M48 3l-3 3" stroke="#d22"/><path d="M50 4h5v2.500h-5zM53 1.500h3v3" stroke="#2a70c0"/><path d="M59 2h4v3h-4zM61 4h3v3h-3z"/><path d="M67 3q2 3 3 3l3-3" fill="none"/><circle cx="77" cy="3.500" r="1.500" fill="#4a9fe8" stroke="#27b"/><path d="M83 2h5v5h-5zM86 4h2v3h-2z"/><path d="M91 4l2-2h4v4h-4z" stroke="#47c"/><path d="M94 4l3 3" stroke="#d22"/><path d="M100 5q0-3 3-3t3 3zM103 2v5"/><path d="M108 2h3v5M113 1.500v5h-2M112 3h3" fill="none"/><path d="M119 2l-2 2 2 2" fill="none" stroke="#222"/></svg>
<div class="flex-grow-1 d-flex justify-content-center"><svg width="7" height="6"><rect width="7" height="6" fill="#c6c6c6"/></svg></div>
<svg width="16" height="6" viewBox="0 0 16 6"><path d="M6 1.500L8 3 6 4.500" fill="none" stroke="#333"/></svg></div>
</section>
</main>
<footer class="statusbar d-flex align-items-center"><span class="flex-grow-1">Fare clic per selezionare, premere TAB per alternare, CTRL per aggiungere e MAIUSC per deselezionare.</span>
<div class="stright d-flex align-items-center gap-1">
<svg width="7" height="7" viewBox="0 0 7 7" fill="none" stroke="#777" stroke-width=".9"><path d="M1 6V2h2M4 6V3l2-1v4M2 4h2"/></svg>
<select class="workset" aria-label="Workset attivo"><option></option></select>
<svg width="6" height="7" viewBox="0 0 6 7" fill="none" stroke="#888"><path d="M1 6l4-5M0 6h3"/></svg><span>:0</span>
<svg width="7" height="7" viewBox="0 0 7 7" fill="#eef" stroke="#334"><path d="M.5 1h6v5h-6zM.5 2h6"/></svg>
<svg width="7" height="7" viewBox="0 0 7 7" fill="#ccc" stroke="#777"><path d="M1 1h5v4.500H1zM1 3h5"/></svg>
<select class="design" aria-label="Opzione di progetto"><option>Modello principale</option></select>
<svg class="ms-auto" width="73" height="8" viewBox="0 0 73 8" fill="none" stroke="#555"><path d="M4 2h6L8 4v3H6V4z" fill="#f2b21c" stroke="#b07d0c" stroke-width=".7"/><path d="M14 3h5v3h-5z" fill="#dce9f8" stroke="#27b"/><path d="M16 5l4-4" stroke="#d33"/><path d="M25 2l3 2 1 3-4-1z" fill="#f4b43a" stroke="#b75"/><path d="M28 4l3 3" stroke="#d33"/><path d="M34 2h5v5h-5z" fill="#dce9f8" stroke="#27b"/><path d="M37 4l3-3" stroke="#d33"/><path d="M44 2l3 3h3M46 2l-2 2 2 2" stroke="#333"/><circle cx="57" cy="4" r="2" stroke="#888"/><path d="M65 1.500h6l-2.500 3V7l-1-.5v-2z" stroke="#445" fill="#cfd8e2" stroke-width=".8"/></svg><span>:0</span>
</div></footer>
</div>
</body>
</html>
